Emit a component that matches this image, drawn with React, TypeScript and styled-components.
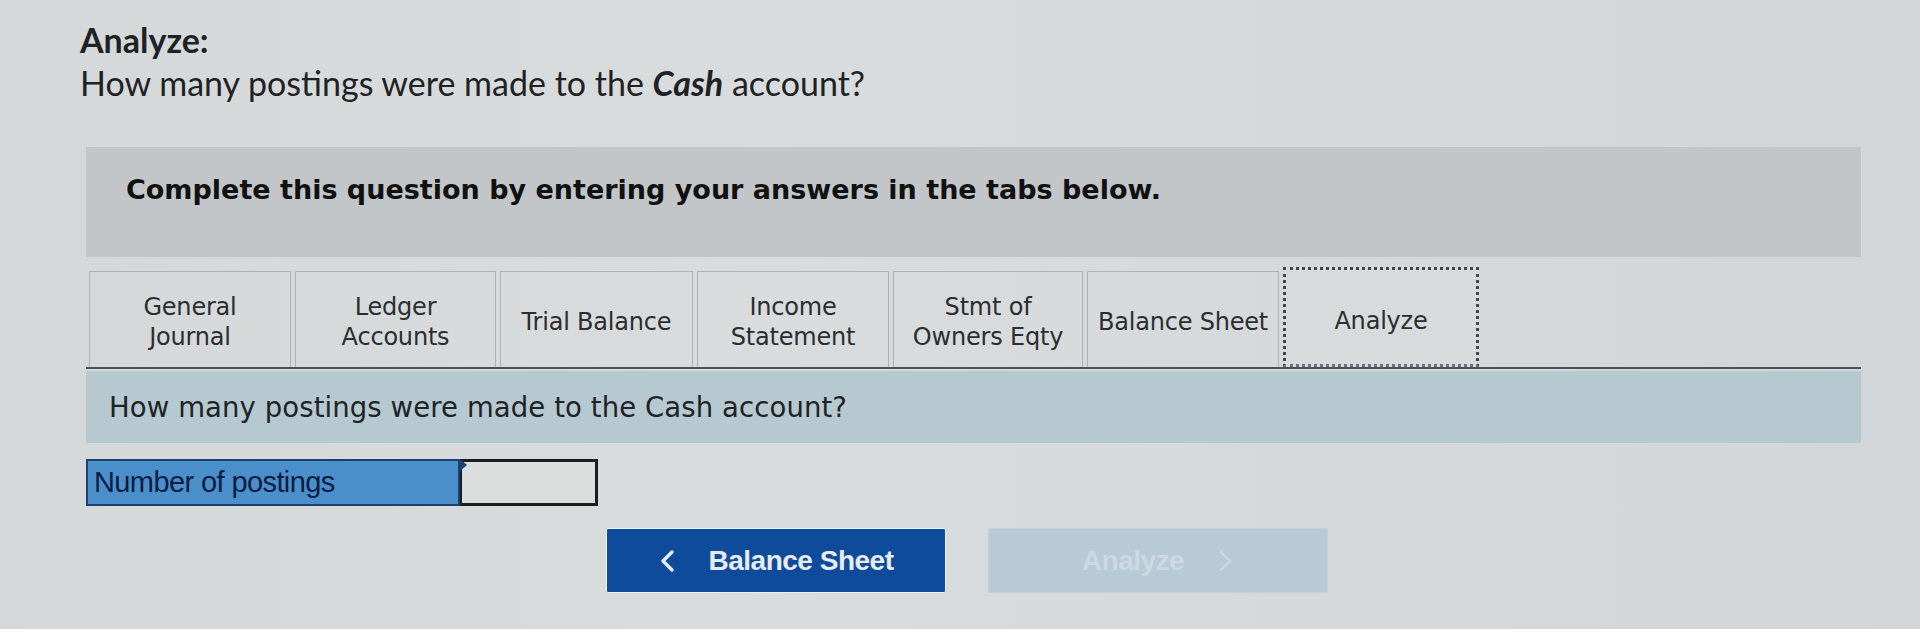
import styled, { createGlobalStyle, css } from 'styled-components'

const GlobalStyle = createGlobalStyle`
  body {
    margin: 0;
    background: linear-gradient(90deg, #d5d8d9 0%, #d9dcdd 40%, #d3d6d8 100%);
    font-family: "DejaVu Sans", Verdana, sans-serif;
  }
`

const Page = styled.div`
  width: 1920px;
  height: 629px;
  padding: 18px 0 0 80px;
  box-sizing: border-box;
  overflow: hidden;
`

const Heading = styled.div`
  font-family: Lato, "Open Sans", sans-serif;
  font-size: 34px;
  line-height: 43px;
  color: #1f2224;

  strong {
    font-weight: 700;
  }

  em {
    font-weight: 700;
    font-style: italic;
  }
`

const Main = styled.div`
  width: 1775px;
  margin-left: 6px;
  margin-top: 43px;
`

const Instruction = styled.div`
  height: 110px;
  background: #c3c6c8;
  padding: 27px 0 0 40px;
  box-sizing: border-box;
  font-size: 27px;
  font-weight: 700;
  color: #111;
  letter-spacing: 0px;
`

const TabRow = styled.div`
  display: flex;
  gap: 4px;
  margin-top: 14px;
  padding-left: 3px;
  border-bottom: 2px solid #4b5156;
`

const Tab = styled.div<{ $w: number; $active?: boolean }>`
  flex: 0 0 ${(p) => p.$w}px;
  height: 96px;
  box-sizing: border-box;
  display: flex;
  align-items: center;
  justify-content: center;
  text-align: center;
  font-size: 24px;
  line-height: 30px;
  letter-spacing: -0.2px;
  color: #2b2d30;
  border: 1px solid #aeb2b4;
  border-bottom: none;
  padding-top: 5px;

  ${(p) =>
    p.$active &&
    css`
      height: 100px;
      margin-top: -4px;
      margin-bottom: -2px;
      padding-top: 8px;
      border: 3px dotted #3a4656;
      border-bottom: 3px dotted #6a7480;
      background: #d8dbdc;
    `}
`

const QuestionBand = styled.div`
  height: 72px;
  margin-top: 2px;
  background: #b6c8d0;
  padding-left: 23px;
  display: flex;
  align-items: center;
  font-size: 27.5px;
  letter-spacing: 0.1px;
  color: #202326;
`

const FieldRow = styled.div`
  display: flex;
  margin-top: 16px;
  height: 47px;
`

const FieldLabel = styled.div`
  width: 374px;
  box-sizing: border-box;
  background: #4a8fca;
  border: 2px solid #1f3f6c;
  display: flex;
  align-items: center;
  padding-left: 6px;
  font-family: "Liberation Sans", Arial, sans-serif;
  font-size: 29px;
  letter-spacing: -0.6px;
  color: #0b1c45;
`

const FieldInput = styled.div`
  position: relative;
  width: 138px;
  box-sizing: border-box;
  background: #dcdede;
  border: 3px solid #1b1c1e;
  border-left-width: 2px;

  &::before {
    content: '';
    position: absolute;
    left: -2px;
    top: -3px;
    border-top: 6px solid transparent;
    border-bottom: 6px solid transparent;
    border-left: 7px solid #1f3f6c;
  }
`

const ButtonRow = styled.div`
  display: flex;
  gap: 42px;
  margin-top: 22px;
  padding-left: 520px;
`

const NavButton = styled.div<{ $disabled?: boolean }>`
  width: 340px;
  height: 65px;
  box-sizing: border-box;
  border-radius: 2px;
  display: flex;
  align-items: center;
  justify-content: center;
  gap: 34px;
  font-family: "Liberation Sans", Arial, sans-serif;
  font-size: 28px;
  font-weight: 700;
  letter-spacing: -0.5px;
  background: ${(p) => (p.$disabled ? '#b8cad6' : '#0e4b9a')};
  color: ${(p) => (p.$disabled ? '#ccd9e2' : '#e8ebf1')};
  border: 1px solid ${(p) => (p.$disabled ? '#c2d1db' : '#eef1f4')};
`

const Chevron = ({ dir }: { dir: 'left' | 'right' }) => (
  <svg width="16" height="24" viewBox="0 0 16 24" fill="none">
    <path
      d={dir === 'left' ? 'M13 3 L4 12 L13 21' : 'M3 3 L12 12 L3 21'}
      stroke="currentColor"
      strokeWidth={dir === 'left' ? 3.4 : 2.4}
      strokeLinecap="round"
      strokeLinejoin="round"
    />
  </svg>
)

const tabs = [
  { label: ['General', 'Journal'], w: 202 },
  { label: ['Ledger', 'Accounts'], w: 201 },
  { label: ['Trial Balance'], w: 193 },
  { label: ['Income', 'Statement'], w: 192 },
  { label: ['Stmt of', 'Owners Eqty'], w: 190 },
  { label: ['Balance Sheet'], w: 192 },
  { label: ['Analyze'], w: 196, active: true },
]

export default function App() {
  return (
    <>
      <GlobalStyle />
      <Page>
        <Heading>
          <strong>Analyze:</strong>
          <br />
          How many postings were made to the <em>Cash</em> account?
        </Heading>
        <Main>
          <Instruction>Complete this question by entering your answers in the tabs below.</Instruction>
          <TabRow>
            {tabs.map((t) => (
              <Tab key={t.label.join(' ')} $w={t.w} $active={t.active}>
                <span>
                  {t.label.map((line, i) => (
                    <span key={line}>
                      {i > 0 && <br />}
                      {line}
                    </span>
                  ))}
                </span>
              </Tab>
            ))}
          </TabRow>
          <QuestionBand>How many postings were made to the Cash account?</QuestionBand>
          <FieldRow>
            <FieldLabel>Number of postings</FieldLabel>
            <FieldInput />
          </FieldRow>
          <ButtonRow>
            <NavButton>
              <Chevron dir="left" />
              Balance Sheet
            </NavButton>
            <NavButton $disabled>
              Analyze
              <Chevron dir="right" />
            </NavButton>
          </ButtonRow>
        </Main>
      </Page>
    </>
  )
}
